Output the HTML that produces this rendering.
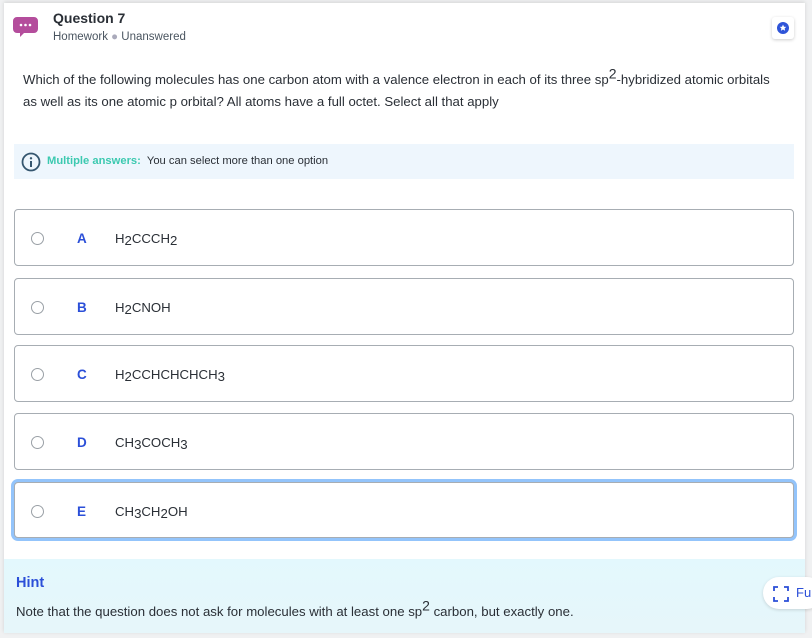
<!DOCTYPE html>
<html><head><style>
body{margin:0;width:812px;height:638px;background:#f0f1f2;font-family:"Liberation Sans",sans-serif;color:#2a2f36;position:relative;overflow:hidden}
.card{position:absolute;left:4px;top:3px;width:801px;height:630px;background:#fff;box-shadow:0 -1px 4px rgba(0,0,0,.12)}
.abs{position:absolute}
.opt{position:absolute;left:14px;width:780px;height:57px;border:1px solid #a7adb3;border-radius:4px;background:#fff;box-sizing:border-box}
.radio{position:absolute;left:16px;top:22px;width:11px;height:11px;border:1.5px solid #9aa0a6;border-radius:50%}
.let{position:absolute;left:62px;top:21px;font-weight:bold;color:#2b4fd8;font-size:13.5px}
.txt{position:absolute;left:100px;top:21px;font-size:13.2px}
.txt sub{font-size:13.2px;vertical-align:-2px;line-height:0}
</style></head><body>
<div class="card"></div>
<svg class="abs" style="left:13px;top:15px" width="26" height="24" viewBox="0 0 26 24"><path d="M4 2h17a4 4 0 0 1 4 4v8a4 4 0 0 1-4 4H11l-4 4v-4H4a4 4 0 0 1-4-4V6a4 4 0 0 1 4-4z" fill="#b44d9c"/><circle cx="8" cy="10" r="1.3" fill="#fff"/><circle cx="12.5" cy="10" r="1.3" fill="#fff"/><circle cx="17" cy="10" r="1.3" fill="#fff"/></svg>
<div class="abs" style="left:53px;top:10px;font-size:14px;font-weight:bold">Question 7</div>
<div class="abs" style="left:53px;top:31px;font-size:11.5px;color:#4a5560">Homework <span style="color:#aab">●</span> Unanswered</div>
<div class="abs" style="left:772px;top:17px;width:22px;height:22px;background:#fff;border-radius:3px;box-shadow:0 1px 3px rgba(0,0,0,.2)"><svg width="22" height="22"><circle cx="11" cy="11" r="6" fill="#2f54d8"/><path d="M11 7.5l1 2.2 2.3.2-1.7 1.5.5 2.3-2.1-1.2-2.1 1.2.5-2.3-1.7-1.5 2.3-.2z" fill="#fff"/></svg></div>
<div class="abs" style="left:23px;top:69px;font-size:13.2px;line-height:22px;width:785px;white-space:nowrap">Which of the following molecules has one carbon atom with a valence electron in each of its three sp<sup style="font-size:14px;line-height:0">2</sup>-hybridized atomic orbitals<br>as well as its one atomic p orbital? All atoms have a full octet. Select all that apply</div>
<div class="abs" style="left:14px;top:144px;width:780px;height:35px;background:#eef6fd"></div>
<svg class="abs" style="left:21px;top:152px" width="20" height="20"><circle cx="10" cy="10" r="8.5" fill="none" stroke="#35566f" stroke-width="1.8"/><rect x="9" y="9" width="2" height="6" fill="#35566f"/><circle cx="10" cy="6.3" r="1.2" fill="#35566f"/></svg>
<div class="abs" style="left:47px;top:155px;font-size:11.2px"><b style="color:#3cc9b0">Multiple answers:</b>&nbsp; You can select more than one option</div>
<div class="opt" style="top:209px"><div class="radio"></div><div class="let">A</div><div class="txt">H<sub>2</sub>CCCH<sub>2</sub></div></div>
<div class="opt" style="top:278px"><div class="radio"></div><div class="let">B</div><div class="txt">H<sub>2</sub>CNOH</div></div>
<div class="opt" style="top:345px"><div class="radio"></div><div class="let">C</div><div class="txt">H<sub>2</sub>CCHCHCHCH<sub>3</sub></div></div>
<div class="opt" style="top:413px"><div class="radio"></div><div class="let">D</div><div class="txt">CH<sub>3</sub>COCH<sub>3</sub></div></div>
<div class="opt" style="top:482px;height:56px;box-shadow:0 0 0 3px #93c4fb"><div class="radio"></div><div class="let">E</div><div class="txt">CH<sub>3</sub>CH<sub>2</sub>OH</div></div>
<div class="abs" style="left:4px;top:559px;width:801px;height:74px;background:linear-gradient(#e3f8fd,#e6f6fa)"></div>
<div class="abs" style="left:16px;top:575px;font-size:14.5px;font-weight:bold;color:#2b4fd8">Hint</div>
<div class="abs" style="left:16px;top:604px;font-size:13.2px;white-space:nowrap">Note that the question does not ask for molecules with at least one sp<sup style="font-size:14px;line-height:0">2</sup> carbon, but exactly one.</div>
<div class="abs" style="left:763px;top:577px;width:60px;height:32px;background:#fff;border-radius:16px;box-shadow:0 1px 3px rgba(0,0,0,.15)"><svg class="abs" style="left:10px;top:9px" width="16" height="16"><path d="M1 5V1h4M11 1h4v4M15 11v4h-4M5 15H1v-4" fill="none" stroke="#2b4fd8" stroke-width="1.8"/></svg><span class="abs" style="left:33px;top:8px;font-size:13px;color:#2b4fd8">Fu</span></div>
</body></html>
